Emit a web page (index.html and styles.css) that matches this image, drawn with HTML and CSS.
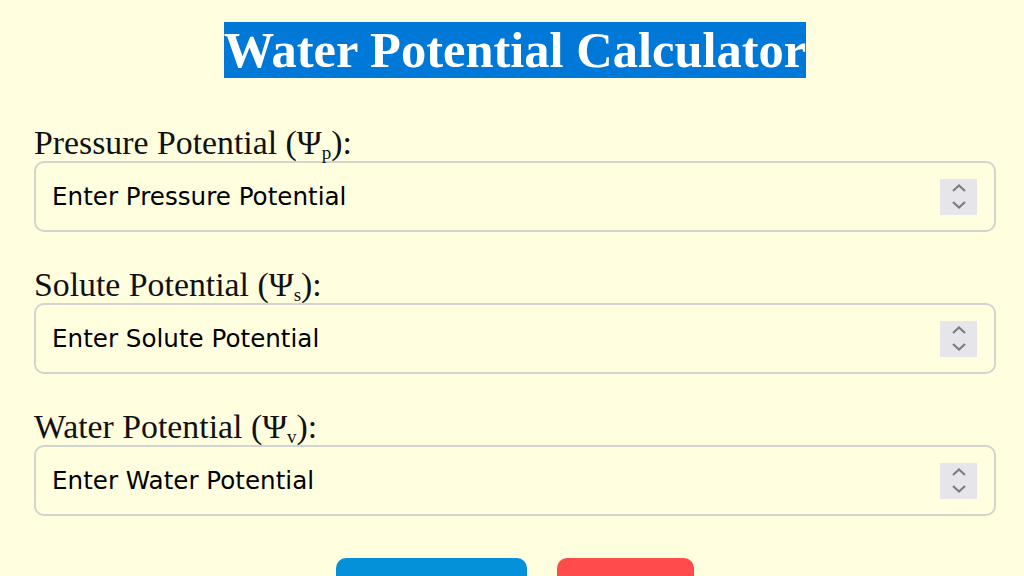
FILE: index.html
```html
<!DOCTYPE html>
<html lang="en">

<head>
    <title>Water Potential Calculator</title>
    <meta charset="UTF-8">
    <link rel="stylesheet" href="styles.css">
</head>

<body>
    <div class="container">
        <h1><span class="title">Water Potential Calculator</span></h1>

        <div class="form-group">
            <label for="pressure">Pressure Potential (&Psi;<sub>p</sub>):</label>
            <div class="number-field">
                <input type="number" id="pressure" placeholder="Enter Pressure Potential">
                <span class="spinner">
                    <svg width="36" height="36" viewBox="0 0 36 36">
                        <polyline points="12,12 18,6.5 24,12" />
                        <polyline points="12,23 18,28.5 24,23" />
                    </svg>
                </span>
            </div>
        </div>

        <div class="form-group">
            <label for="solute">Solute Potential (&Psi;<sub>s</sub>):</label>
            <div class="number-field">
                <input type="number" id="solute" placeholder="Enter Solute Potential">
                <span class="spinner">
                    <svg width="36" height="36" viewBox="0 0 36 36">
                        <polyline points="12,12 18,6.5 24,12" />
                        <polyline points="12,23 18,28.5 24,23" />
                    </svg>
                </span>
            </div>
        </div>

        <div class="form-group">
            <label for="water">Water Potential (&Psi;<sub>v</sub>):</label>
            <div class="number-field">
                <input type="number" id="water" placeholder="Enter Water Potential">
                <span class="spinner">
                    <svg width="36" height="36" viewBox="0 0 36 36">
                        <polyline points="12,12 18,6.5 24,12" />
                        <polyline points="12,23 18,28.5 24,23" />
                    </svg>
                </span>
            </div>
        </div>

        <div class="button-container">
            <button class="calc-button">Calculate</button>
            <button class="reset-button">Reset</button>
        </div>
    </div>
</body>

</html>
```

FILE: styles.css
```css
body {
    background: #ffffe0;
    font-family: "Liberation Serif", "Times New Roman", serif;
    margin: 0;
}

.container {
    padding: 23px 28px 40px 34px;
}

h1 {
    margin: 0 0 46px;
    text-align: center;
    font-size: 50.5px;
    line-height: 55px;
    font-weight: bold;
}

.title {
    background-color: #0078d7;
    color: #fff;
}

.form-group {
    margin-bottom: 34px;
}

.form-group label {
    display: block;
    font-size: 33.8px;
    line-height: 37px;
    color: #111;
}

.form-group sub {
    font-size: 19px;
    line-height: 0;
    vertical-align: -5px;
}

.number-field {
    display: flex;
    align-items: center;
    height: 71px;
    box-sizing: border-box;
    border: 2px solid #d3d3d0;
    border-radius: 10px;
    padding: 0 17px 0 16px;
}

.number-field input {
    flex: 1;
    border: none;
    outline: none;
    background: transparent;
    font-family: "DejaVu Sans", Verdana, sans-serif;
    font-size: 24.6px;
    color: #000;
    padding: 0;
    -moz-appearance: textfield;
}

.number-field input::placeholder {
    color: #000;
}

.number-field input::-webkit-inner-spin-button,
.number-field input::-webkit-outer-spin-button {
    -webkit-appearance: none;
    margin: 0;
}

.spinner {
    display: block;
    width: 37px;
    height: 36px;
    background-color: #e6e6ea;
}

.spinner svg {
    display: block;
    margin: 0 auto;
    fill: none;
    stroke: #7c7c86;
    stroke-width: 2.2;
}

.button-container {
    display: flex;
    justify-content: center;
    gap: 30px;
    margin-top: 42px;
}

.calc-button,
.reset-button {
    color: #fff;
    border: none;
    border-radius: 10px;
    padding: 28px 0 20px;
    font-family: "DejaVu Sans", Verdana, sans-serif;
    font-size: 22px;
    cursor: pointer;
}

.calc-button {
    background-color: #0591d9;
    width: 191px;
}

.reset-button {
    background-color: #ff4b4b;
    width: 137px;
}
```
